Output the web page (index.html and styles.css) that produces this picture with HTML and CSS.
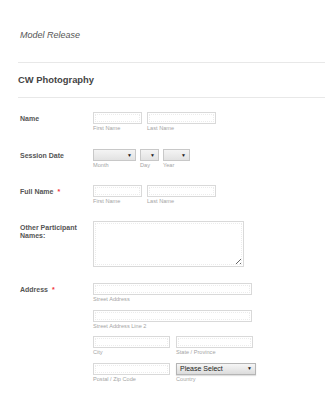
FILE: index.html
```html
<!DOCTYPE html>
<html>
<head>
<meta charset="utf-8">
<link rel="stylesheet" href="styles.css">
</head>
<body>
<div class="title-block"><span class="doc-title">Model Release</span></div>
<div class="section-head"><h1 class="studio">CW Photography</h1></div>
<div class="form">
  <div class="row">
    <div class="label">Name</div>
    <div class="fields">
      <div class="line">
        <div class="cell"><input class="inp w49"><div class="sub">First Name</div></div>
        <div class="cell"><input class="inp w69"><div class="sub">Last Name</div></div>
      </div>
    </div>
  </div>
  <div class="row date-row">
    <div class="label">Session Date</div>
    <div class="fields">
      <div class="line date-line">
        <div class="cell"><div class="sel w43"><span class="arr">&#9660;</span></div><div class="sub">Month</div></div>
        <div class="cell"><div class="sel w19"><span class="arr">&#9660;</span></div><div class="sub">Day</div></div>
        <div class="cell"><div class="sel w27"><span class="arr">&#9660;</span></div><div class="sub">Year</div></div>
      </div>
    </div>
  </div>
  <div class="row">
    <div class="label">Full Name<span class="req">*</span></div>
    <div class="fields">
      <div class="line">
        <div class="cell"><input class="inp w49"><div class="sub">First Name</div></div>
        <div class="cell"><input class="inp w69"><div class="sub">Last Name</div></div>
      </div>
    </div>
  </div>
  <div class="row">
    <div class="label">Other Participant Names:</div>
    <div class="fields">
      <textarea class="area"></textarea>
    </div>
  </div>
  <div class="row">
    <div class="label">Address<span class="req">*</span></div>
    <div class="fields addr">
      <div class="cell"><input class="inp w159"><div class="sub">Street Address</div></div>
      <div class="cell"><input class="inp w159"><div class="sub">Street Address Line 2</div></div>
      <div class="line wide">
        <div class="cell"><input class="inp w77"><div class="sub">City</div></div>
        <div class="cell"><input class="inp w77"><div class="sub">State / Province</div></div>
      </div>
      <div class="line wide">
        <div class="cell"><input class="inp w77"><div class="sub">Postal / Zip Code</div></div>
        <div class="cell"><div class="country"><span class="ctext">Please Select</span><span class="arr dark">&#9660;</span></div><div class="sub">Country</div></div>
      </div>
    </div>
  </div>
</div>
</body>
</html>
```
FILE: styles.css
```css
* { box-sizing: border-box; }
body {
  margin: 0;
  background: #fff;
  font-family: "Liberation Sans", Arial, sans-serif;
  color: #555;
}
.title-block {
  margin-left: 18px;
  height: 63px;
  padding: 29px 0 0 2px;
  border-bottom: 1px solid #e8e8e8;
}
.doc-title {
  display: block;
  font-size: 9px;
  line-height: 12px;
  font-style: italic;
  color: #555;
}
.section-head {
  margin-left: 18px;
  height: 35px;
  border-bottom: 1px solid #e8e8e8;
  display: flex;
  align-items: center;
  padding-bottom: 1px;
}
.studio {
  margin: 0;
  font-size: 9.4px;
  font-weight: bold;
  color: #444;
}
.form {
  padding-top: 14px;
  display: flex;
  flex-direction: column;
  gap: 16px;
}
.row { display: flex; }
.date-row { margin-top: 1px; }
.label {
  width: 93px;
  padding: 3px 0 0 20px;
  font-size: 7px;
  line-height: 8px;
  font-weight: bold;
  color: #555;
}
.req {
  color: #f2363b;
  margin-left: 4px;
  font-size: 7px;
}
.fields { display: flex; flex-direction: column; }
.line { display: flex; gap: 5px; }
.date-line { gap: 4px; }
.line.wide { gap: 6px; }
.addr { gap: 6.5px; }
.cell { display: flex; flex-direction: column; }
.inp {
  display: block;
  height: 12px;
  margin: 0;
  padding: 0;
  border: 1px solid #d9d9d9;
  background: #fff;
  outline: 1px dotted #ececec;
  outline-offset: -3px;
}
.w49 { width: 49px; }
.w69 { width: 69px; }
.w159 { width: 159px; }
.w77 { width: 77px; }
.w43 { width: 43px; }
.w19 { width: 19px; }
.w27 { width: 27px; }
.sub {
  margin-top: 1px;
  font-size: 5.6px;
  line-height: 7px;
  color: #a5a5a5;
  white-space: nowrap;
}
.sel {
  height: 12px;
  border: 1px solid #c8c8c8;
  background: linear-gradient(#f4f4f4, #e2e2e2);
  display: flex;
  align-items: center;
  justify-content: flex-end;
  padding-right: 3px;
}
.arr {
  font-size: 5px;
  line-height: 5px;
  color: #222;
}
.arr.dark { color: #222; }
.area {
  display: block;
  width: 151px;
  height: 46px;
  margin: 0;
  padding: 0;
  border: 1px solid #d9d9d9;
  outline: 1px dotted #ececec;
  outline-offset: -3px;
  resize: both;
}
.country {
  width: 80px;
  height: 12px;
  border: 1px solid #b5b5b5;
  background: linear-gradient(#f6f6f6, #dcdcdc);
  box-shadow: 0 1px 1px rgba(0,0,0,0.12);
  display: flex;
  align-items: center;
  justify-content: space-between;
  padding: 0 3px 0 3px;
}
.ctext {
  font-size: 7px;
  line-height: 10px;
  color: #222;
}
```
